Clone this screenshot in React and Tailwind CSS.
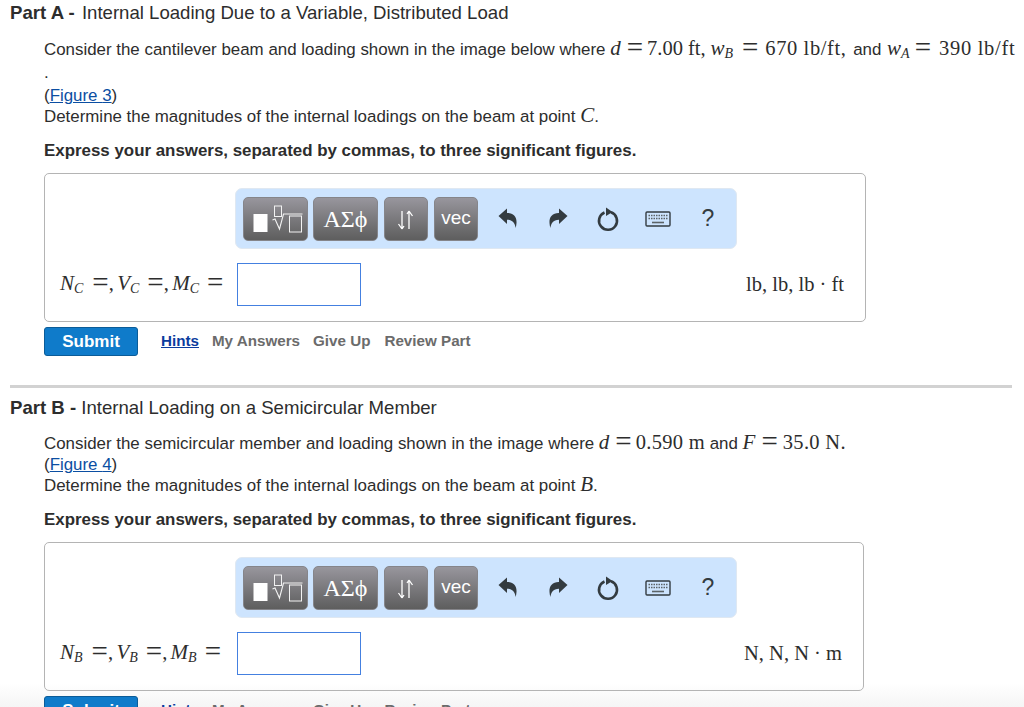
import React from 'react';

const serif = "font-['Liberation_Serif',serif]";

function V({ children, sub, className = '' }) {
  return (
    <span className={`${serif} text-[21px] leading-[0] italic ${className}`}>
      {children}
      {sub && <span className="text-[14px] align-[-3px] leading-[0]">{sub}</span>}
    </span>
  );
}

function R({ children, className = 'tracking-[0.3px]' }) {
  return <span className={`${serif} text-[20.5px] leading-[0] ${className}`}>{children}</span>;
}

function Eq({ className = 'ml-[6px] mr-[4px]' }) {
  return <span className={`${serif} text-[29px] leading-[0] align-[-2px] ${className}`}>=</span>;
}

function SqrtButton() {
  return (
    <button className="w-[65px] h-[44px] rounded-[5px] bg-gradient-to-b from-[#98969d] to-[#5e5e5e] border border-[#85858a] flex items-center justify-center">
      <svg width="56" height="36" viewBox="0 0 56 36" fill="none">
        <rect x="5.5" y="13" width="14" height="18" fill="#fff" />
        <rect x="26.5" y="5" width="7" height="10.5" stroke="#f2f2f2" strokeWidth="1" />
        <path d="M24.5 19l2.5 -1 4.5 10 4 -15h19" stroke="#f2f2f2" strokeWidth="1.1" />
        <rect x="41.5" y="15" width="12" height="16" stroke="#f2f2f2" strokeWidth="1" />
      </svg>
    </button>
  );
}

function GrayButton({ className, children }) {
  return (
    <button className={`h-[44px] rounded-[5px] bg-gradient-to-b from-[#98969d] to-[#5e5e5e] border border-[#85858a] text-white flex items-center justify-center ${className}`}>
      {children}
    </button>
  );
}

function Undo({ flip }) {
  return (
    <svg width="20" height="21" viewBox="0 0 20 21" className={flip ? '-scale-x-100' : ''}>
      <path d="M.5 8L9 .5V5c6-.2 10 3.5 9.5 10-.1 1.8-.5 3.6-.9 5-.5-4.2-2.6-8.2-8.6-8.2V16z" fill="#333b40" />
    </svg>
  );
}

function Toolbar() {
  return (
    <div className="ml-[190px] w-[502px] h-[61px] rounded-[7px] bg-[#cde4fe] border border-[#dfe8f2] flex items-center pl-[7px]">
      <SqrtButton />
      <GrayButton className={`ml-[5px] w-[65px] text-[24px] ${serif}`}>ΑΣϕ</GrayButton>
      <GrayButton className="ml-[6px] w-[44px]">
        <svg width="24" height="24" viewBox="0 0 24 24" fill="none" stroke="#fff" strokeWidth="1.3">
          <path d="M8 4v18M4.5 17L8 22M8 22l2-3" />
          <path d="M15 22V4M15 4l3.5 5M15 4l-2 3" />
        </svg>
      </GrayButton>
      <GrayButton className="ml-[6px] w-[44px] text-[19px] font-['Liberation_Sans',sans-serif]">vec</GrayButton>
      <div className="ml-[5px] w-[50px] flex justify-center"><Undo /></div>
      <div className="w-[50px] flex justify-center"><Undo flip /></div>
      <div className="w-[50px] flex justify-center">
        <svg width="24" height="26" viewBox="0 0 24 26" fill="none">
          <path d="M8.5 6.5A9 9 0 1 0 15 6.3" stroke="#333b40" strokeWidth="2.6" />
          <path d="M10 1.5l6.5 4.6L10 10z" fill="#333b40" />
        </svg>
      </div>
      <div className="w-[50px] flex justify-center">
        <svg width="26" height="16" viewBox="0 0 26 16" fill="none">
          <rect x="1" y="1" width="24" height="14" rx="1" stroke="#333b40" strokeWidth="1.4" />
          <path d="M3.5 4.5h19M3.5 7.5h19" stroke="#5b6367" strokeWidth="1.5" strokeDasharray="1.5 1" />
          <path d="M7 11.5h12" stroke="#5b6367" strokeWidth="1.6" />
        </svg>
      </div>
      <div className="w-[50px] text-center text-[23px] text-[#333b40] leading-none">?</div>
    </div>
  );
}

function Label({ s }) {
  return (
    <>
      <V sub={s}>N</V><Eq className="ml-[9px]" /><R>,</R>
      <V sub={s} className="ml-[3px]">V</V><Eq className="ml-[8px]" /><R>,</R>
      <V sub={s} className="ml-[3px]">M</V><Eq className="ml-[8px]" />
    </>
  );
}

function AnswerBox({ width, label, units }) {
  return (
    <div className={`${width} h-[149px] border border-[#b4b4b4] rounded-[5px] pt-[14px]`}>
      <Toolbar />
      <div className="mt-[14px] flex items-center h-[43px] pl-[15px] pr-[21px] justify-between">
        <div className="flex items-center">
          <div className="w-[177px] text-[#2d2d2d] whitespace-nowrap">{label}</div>
          <div className="w-[124px] h-[43px] border border-[#4480e0] bg-white" />
        </div>
        <div className={`${serif} text-[20.5px] text-[#2d2d2d] whitespace-nowrap`}>{units}</div>
      </div>
    </div>
  );
}

function Actions() {
  return (
    <div className="mt-[5px] flex items-center font-bold text-[15.2px] text-[#6b6b6b]">
      <button className="w-[94px] h-[29px] rounded-[3px] bg-[#0f7bca] border border-[#0b5c98] text-white text-[17px]">Submit</button>
      <a className="ml-[23px] text-[#0b3c9e] underline">Hints</a>
      <span className="ml-[13px]">My Answers</span>
      <span className="ml-[13px]">Give Up</span>
      <span className="ml-[14px]">Review Part</span>
    </div>
  );
}

function Figure({ n }) {
  return (
    <div className="h-[21px] leading-[21px]">
      (<a className="text-[#0b4ea2] underline">Figure {n}</a>)
    </div>
  );
}

export default function App() {
  return (
    <div className="relative h-[707px] overflow-hidden bg-white font-['Liberation_Sans',sans-serif] text-[16.9px] text-[#2d2d2d]">
      <div className="absolute left-0 right-0 bottom-0 h-[24px] bg-gradient-to-b from-white to-[#f5f5f5]" />

      <div className="relative">
        <div className="pl-[10px] h-[26px] leading-[26px] text-[18.6px]">
          <b className="mr-[2px]">Part A -</b> Internal Loading Due to a Variable, Distributed Load
        </div>

        <div className="pl-[44px]">
          <div className="mt-[11px] h-[23px] leading-[25px] whitespace-nowrap">
            Consider the cantilever beam and loading shown in the image below where <V>d</V><Eq /><R className="tracking-normal">7.00 ft,</R> <V sub="B">w</V><Eq className="ml-[9px] mr-[7px]" /><R className="tracking-[0.6px] mr-[2px]">670 lb/ft,</R> and <V sub="A" className="ml-[1px]">w</V><Eq className="ml-[5px] mr-[8px]" /><R className="tracking-[0.7px]">390 lb/ft</R>
          </div>
          <div className="mt-[1px] h-[23px] leading-[23px]">.</div>
          <div className="mt-[1px]"><Figure n={3} /></div>
          <div className="h-[21px] leading-[21px]">
            Determine the magnitudes of the internal loadings on the beam at point <V>C</V>.
          </div>
          <div className="mt-[13px] h-[21px] leading-[21px] font-bold">Express your answers, separated by commas, to three significant figures.</div>
          <div className="mt-[12px]">
            <AnswerBox width="w-[822px]" label={<Label s="C" />} units="lb, lb, lb · ft" />
          </div>
          <Actions />
        </div>

        <div className="mt-[29px] ml-[10px] w-[1002px] h-[3px] bg-[#d2d2d2]" />

        <div className="mt-[7px] pl-[10px] h-[26px] leading-[26px] text-[18.6px]">
          <b>Part B -</b> Internal Loading on a Semicircular Member
        </div>

        <div className="pl-[44px]">
          <div className="mt-[11px] h-[22px] leading-[24px] whitespace-nowrap">
            Consider the semicircular member and loading shown in the image where <V>d</V><Eq /><R>0.590 m</R> and <V>F</V><Eq className="ml-[6px] mr-[5px]" /><R>35.0 N.</R>
          </div>
          <Figure n={4} />
          <div className="h-[21px] leading-[21px]">
            Determine the magnitudes of the internal loadings on the beam at point <V>B</V>.
          </div>
          <div className="mt-[13px] h-[21px] leading-[21px] font-bold">Express your answers, separated by commas, to three significant figures.</div>
          <div className="mt-[12px]">
            <AnswerBox width="w-[820px]" label={<Label s="B" />} units="N, N, N · m" />
          </div>
          <Actions />
        </div>
      </div>
    </div>
  );
}
